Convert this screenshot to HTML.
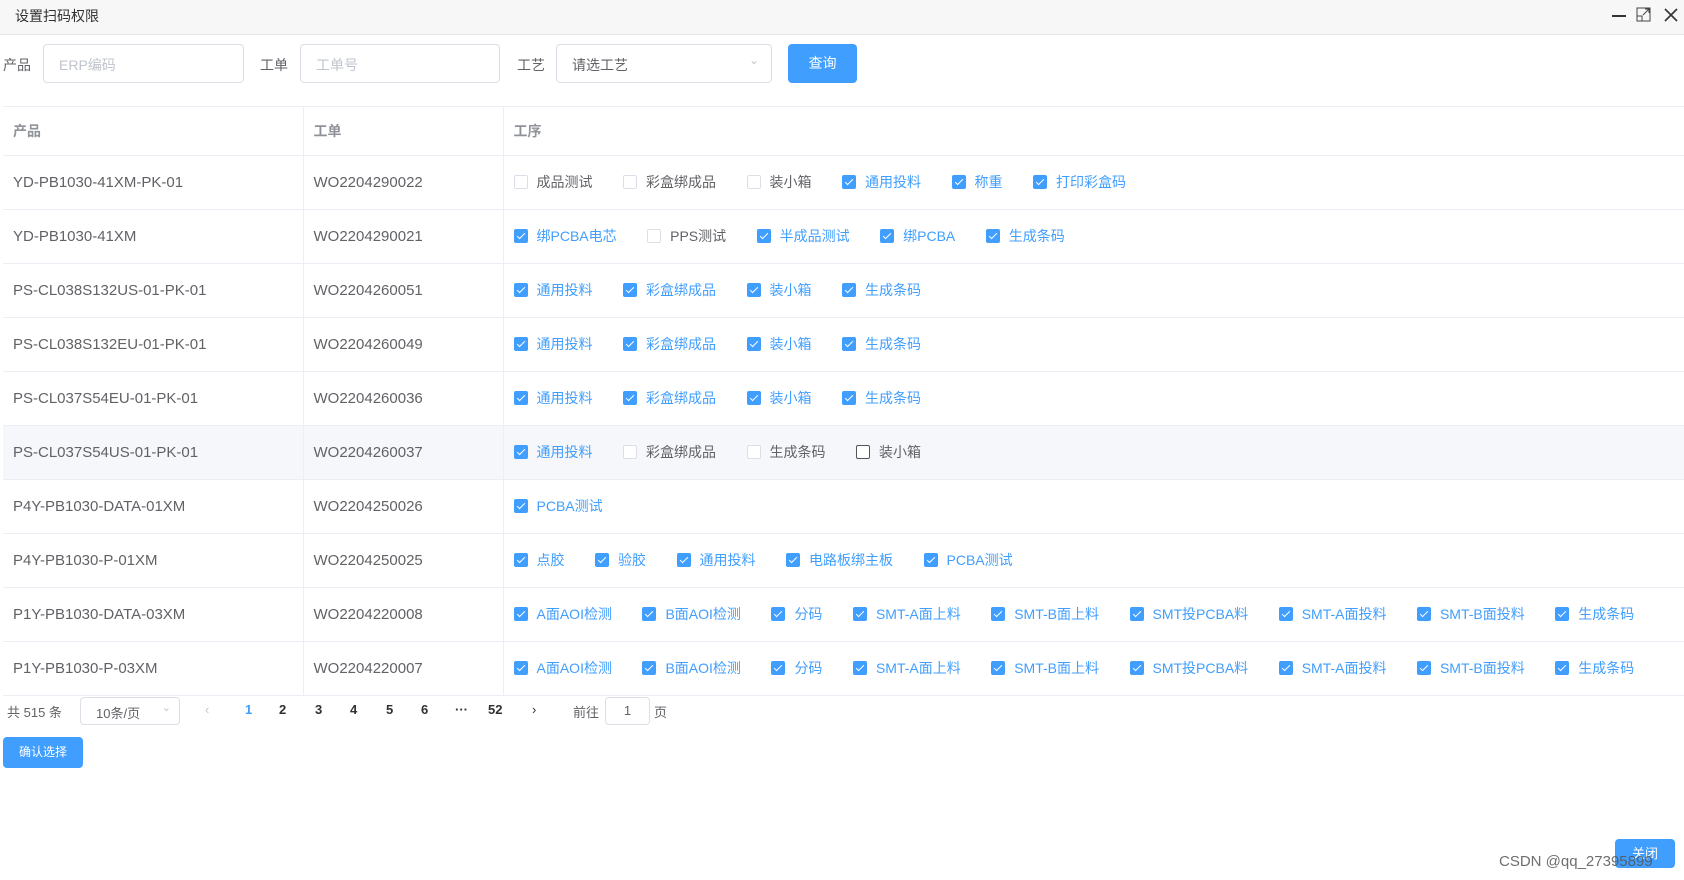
<!DOCTYPE html>
<html><head><meta charset="utf-8">
<style>
*{box-sizing:border-box;margin:0;padding:0}
body{width:1684px;height:880px;overflow:hidden;background:#fff;font-family:"Liberation Sans","Noto Sans CJK SC",sans-serif;color:#606266;position:relative}
.title{position:absolute;left:0;top:0;width:1684px;height:35px;background:#f7f7f7;border-bottom:1px solid #e6e6e6;font-size:14px;color:#303133;padding:6px 15px}
.ctl{position:absolute;top:7px}
.lbl{position:absolute;top:55px;font-size:14px;color:#606266}
.inp{position:absolute;top:44px;height:39px;border:1px solid #dcdfe6;border-radius:4px;font-size:14px;color:#c0c4cc;padding:10px 15px}
.btn{position:absolute;background:#409eff;color:#fff;border-radius:4px;font-size:14px;text-align:center}
table{position:absolute;left:3px;top:106px;width:1681px;border-collapse:collapse;font-size:15px}
td,th{border:1px solid #ebeef5;text-align:left;padding:0 10px;height:54px;vertical-align:middle;white-space:nowrap}
th{height:49px;color:#909399;font-size:14px;font-weight:bold}
tr.hl td{background:#f5f7fa}
td:first-child,th:first-child{border-left:none;width:300px}
td:nth-child(2),th:nth-child(2){width:200px}
td:last-child,th:last-child{border-right:none}
.cb{display:inline-flex;align-items:center;margin-right:30.5px;font-size:14px;white-space:nowrap}
.cb i{width:14px;height:14px;border:1px solid #dcdfe6;border-radius:2px;margin-right:9px;background:#fff;position:relative;display:inline-block}
.cb.on{color:#409eff}
.cb.on i{background:#409eff;border-color:#409eff}
.cb.on i:after{content:"";position:absolute;left:4px;top:1px;width:3px;height:7px;border:solid #fff;border-width:0 1.5px 1.5px 0;transform:rotate(45deg)}
.pg{position:absolute;top:702px;font-size:13px}
.pn{position:absolute;top:702px;font-size:13px;font-weight:bold;color:#303133}
</style></head><body>
<div class="title">设置扫码权限</div>
<svg class="ctl" style="left:1611px" width="16" height="16"><path d="M1 9H15" stroke="#333" stroke-width="2"/></svg>
<svg class="ctl" style="left:1636px" width="16" height="16"><rect x="1" y="1" width="13" height="13" fill="none" stroke="#444" stroke-width="1"/><rect x="1" y="9" width="5" height="5" fill="none" stroke="#444"/><path d="M7 8L13 2M9 2H13V6" fill="none" stroke="#444"/></svg>
<svg class="ctl" style="left:1663px" width="16" height="16"><path d="M2 2L14 14M14 2L2 14" stroke="#333" stroke-width="1.6"/></svg>

<div class="lbl" style="left:3px">产品</div>
<div class="inp" style="left:43px;width:201px">ERP编码</div>
<div class="lbl" style="left:260px">工单</div>
<div class="inp" style="left:300px;width:200px">工单号</div>
<div class="lbl" style="left:517px">工艺</div>
<div class="inp" style="left:556px;width:216px;color:#606266">请选工艺<span style="position:absolute;right:12px;top:8px;color:#c0c4cc;font-size:12px">&#8964;</span></div>
<div class="btn" style="left:788px;top:44px;width:69px;height:39px;line-height:39px">查询</div>

<table>
<tr><th>产品</th><th>工单</th><th>工序</th></tr>
<tr><td>YD-PB1030-41XM-PK-01</td><td>WO2204290022</td><td><span class="cb"><i></i>成品测试</span><span class="cb"><i></i>彩盒绑成品</span><span class="cb"><i></i>装小箱</span><span class="cb on"><i></i>通用投料</span><span class="cb on"><i></i>称重</span><span class="cb on"><i></i>打印彩盒码</span></td></tr>
<tr><td>YD-PB1030-41XM</td><td>WO2204290021</td><td><span class="cb on"><i></i>绑PCBA电芯</span><span class="cb"><i></i>PPS测试</span><span class="cb on"><i></i>半成品测试</span><span class="cb on"><i></i>绑PCBA</span><span class="cb on"><i></i>生成条码</span></td></tr>
<tr><td>PS-CL038S132US-01-PK-01</td><td>WO2204260051</td><td><span class="cb on"><i></i>通用投料</span><span class="cb on"><i></i>彩盒绑成品</span><span class="cb on"><i></i>装小箱</span><span class="cb on"><i></i>生成条码</span></td></tr>
<tr><td>PS-CL038S132EU-01-PK-01</td><td>WO2204260049</td><td><span class="cb on"><i></i>通用投料</span><span class="cb on"><i></i>彩盒绑成品</span><span class="cb on"><i></i>装小箱</span><span class="cb on"><i></i>生成条码</span></td></tr>
<tr><td>PS-CL037S54EU-01-PK-01</td><td>WO2204260036</td><td><span class="cb on"><i></i>通用投料</span><span class="cb on"><i></i>彩盒绑成品</span><span class="cb on"><i></i>装小箱</span><span class="cb on"><i></i>生成条码</span></td></tr>
<tr class="hl"><td>PS-CL037S54US-01-PK-01</td><td>WO2204260037</td><td><span class="cb on"><i></i>通用投料</span><span class="cb"><i></i>彩盒绑成品</span><span class="cb"><i></i>生成条码</span><span class="cb"><i style="border-color:#555"></i>装小箱</span></td></tr>
<tr><td>P4Y-PB1030-DATA-01XM</td><td>WO2204250026</td><td><span class="cb on"><i></i>PCBA测试</span></td></tr>
<tr><td>P4Y-PB1030-P-01XM</td><td>WO2204250025</td><td><span class="cb on"><i></i>点胶</span><span class="cb on"><i></i>验胶</span><span class="cb on"><i></i>通用投料</span><span class="cb on"><i></i>电路板绑主板</span><span class="cb on"><i></i>PCBA测试</span></td></tr>
<tr><td>P1Y-PB1030-DATA-03XM</td><td>WO2204220008</td><td><span class="cb on"><i></i>A面AOI检测</span><span class="cb on"><i></i>B面AOI检测</span><span class="cb on"><i></i>分码</span><span class="cb on"><i></i>SMT-A面上料</span><span class="cb on"><i></i>SMT-B面上料</span><span class="cb on"><i></i>SMT投PCBA料</span><span class="cb on"><i></i>SMT-A面投料</span><span class="cb on"><i></i>SMT-B面投料</span><span class="cb on"><i></i>生成条码</span></td></tr>
<tr><td>P1Y-PB1030-P-03XM</td><td>WO2204220007</td><td><span class="cb on"><i></i>A面AOI检测</span><span class="cb on"><i></i>B面AOI检测</span><span class="cb on"><i></i>分码</span><span class="cb on"><i></i>SMT-A面上料</span><span class="cb on"><i></i>SMT-B面上料</span><span class="cb on"><i></i>SMT投PCBA料</span><span class="cb on"><i></i>SMT-A面投料</span><span class="cb on"><i></i>SMT-B面投料</span><span class="cb on"><i></i>生成条码</span></td></tr>
</table>

<div class="pg" style="left:7px">共 515 条</div>
<div class="inp" style="left:80px;top:697px;width:100px;height:28px;padding:5px 15px;font-size:13px;color:#606266">10条/页<span style="position:absolute;right:8px;top:3px;color:#c0c4cc;font-size:11px">&#8964;</span></div>
<div class="pg" style="left:205px;color:#c0c4cc">&lsaquo;</div>
<div class="pn" style="left:245px;color:#409eff">1</div>
<div class="pn" style="left:279px">2</div>
<div class="pn" style="left:315px">3</div>
<div class="pn" style="left:350px">4</div>
<div class="pn" style="left:386px">5</div>
<div class="pn" style="left:421px">6</div>
<div class="pn" style="left:455px">···</div>
<div class="pn" style="left:488px">52</div>
<div class="pg" style="left:532px;color:#303133">&rsaquo;</div>
<div class="pg" style="left:573px">前往</div>
<div class="inp" style="left:605px;top:697px;width:45px;height:28px;padding:5px 0;text-align:center;font-size:13px;color:#606266">1</div>
<div class="pg" style="left:654px">页</div>
<div class="btn" style="left:3px;top:737px;width:80px;height:31px;line-height:31px;font-size:12px">确认选择</div>
<div class="btn" style="left:1615px;top:839px;width:60px;height:29px;line-height:29px;font-size:13px">关闭</div>
<div style="position:absolute;left:1499px;top:853px;font-size:15px;color:#555;opacity:.85">CSDN @qq_27395899</div>
</body></html>
